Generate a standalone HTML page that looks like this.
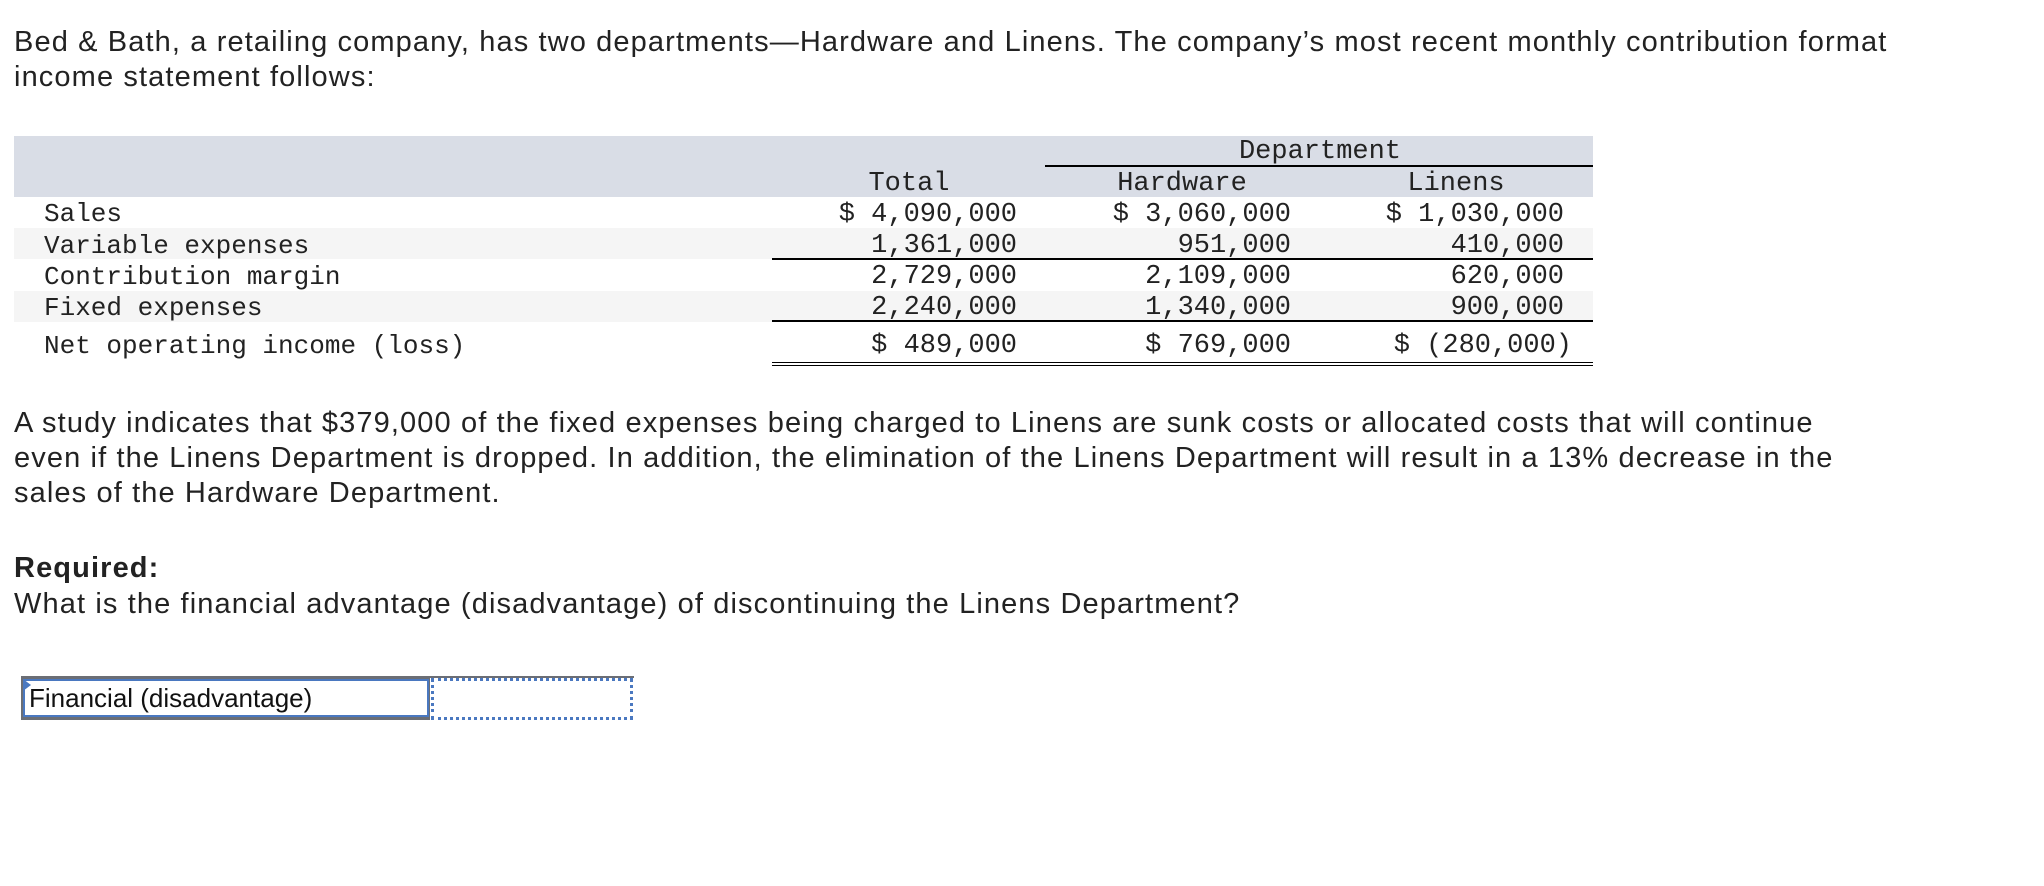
<!DOCTYPE html>
<html><head><meta charset="utf-8"><style>
body{margin:0;width:2044px;height:886px;background:#fff;position:relative;overflow:hidden;font-family:"Liberation Sans",sans-serif;color:#222}
.t{position:absolute;left:14px;font-size:29px;letter-spacing:1.12px;line-height:35px;white-space:nowrap}
.m{position:absolute;font-family:"Liberation Mono",monospace;font-size:27px;line-height:31px;white-space:pre;color:#222}
.l{font-size:26px}
.band{position:absolute;left:14px;width:1579px}
.r{text-align:right}
.line{position:absolute;background:#000;height:2px}
</style></head><body>
<div class="t" style="top:25px">Bed &amp; Bath, a retailing company, has two departments—Hardware and Linens. The company’s most recent monthly contribution format<br>income statement follows:</div>

<div class="band" style="top:136px;height:61px;background:#d9dde6"></div>
<div class="band" style="top:228px;height:31px;background:#f5f5f5"></div>
<div class="band" style="top:291px;height:31px;background:#f5f5f5"></div>

<div class="m" style="left:1220px;width:200px;text-align:center;top:137px">Department</div>
<div class="line" style="left:1045px;width:548px;top:165px"></div>
<div class="m" style="left:809px;width:200px;text-align:center;top:169px">Total</div>
<div class="m" style="left:1082px;width:200px;text-align:center;top:169px">Hardware</div>
<div class="m" style="left:1356px;width:200px;text-align:center;top:169px">Linens</div>

<div class="m l" style="left:44px;top:199px">Sales</div>
<div class="m l" style="left:44px;top:231px">Variable expenses</div>
<div class="m l" style="left:44px;top:262px">Contribution margin</div>
<div class="m l" style="left:44px;top:293px">Fixed expenses</div>
<div class="m l" style="left:44px;top:331px">Net operating income (loss)</div>

<div class="m r" style="left:717px;width:300px;top:200px">$ 4,090,000<br>1,361,000</div>
<div class="m r" style="left:717px;width:300px;top:262px">2,729,000<br>2,240,000</div>
<div class="m r" style="left:717px;width:300px;top:331px">$ 489,000</div>
<div class="m r" style="left:991px;width:300px;top:200px">$ 3,060,000<br>951,000</div>
<div class="m r" style="left:991px;width:300px;top:262px">2,109,000<br>1,340,000</div>
<div class="m r" style="left:991px;width:300px;top:331px">$ 769,000</div>
<div class="m r" style="left:1264px;width:300px;top:200px">$ 1,030,000<br>410,000</div>
<div class="m r" style="left:1264px;width:300px;top:262px">620,000<br>900,000</div>
<div class="m r" style="left:1272px;width:300px;top:331px">$ (280,000)</div>

<div class="line" style="left:772px;width:821px;top:258px"></div>
<div class="line" style="left:772px;width:821px;top:320px"></div>
<div class="line" style="left:772px;width:821px;top:362px;height:1px"></div>
<div class="line" style="left:772px;width:821px;top:365px;height:1px"></div>

<div class="t" style="top:406px">A study indicates that $379,000 of the fixed expenses being charged to Linens are sunk costs or allocated costs that will continue<br>even if the Linens Department is dropped. In addition, the elimination of the Linens Department will result in a 13% decrease in the<br>sales of the Hardware Department.</div>
<div class="t" style="top:551px;font-weight:bold">Required:</div>
<div class="t" style="top:587px">What is the financial advantage (disadvantage) of discontinuing the Linens Department?</div>

<div style="position:absolute;left:21px;top:676px;width:409px;height:44px;box-sizing:border-box;border:2px solid #6b6e75;border-top-width:3px;border-bottom-width:3px"></div>
<div style="position:absolute;left:23px;top:679px;width:406px;height:38px;box-sizing:border-box;border:2px solid #4a78c0"></div>
<div style="position:absolute;left:23px;top:679px;width:0;height:0;border-left:8px solid #4a78c0;border-top:6px solid transparent;border-bottom:6px solid transparent"></div>
<div style="position:absolute;left:29px;top:682px;font-size:26px;line-height:32px;color:#111">Financial (disadvantage)</div>
<div style="position:absolute;left:430px;top:676px;width:204px;height:44px;box-sizing:border-box;border-top:2px solid #6b6e75"></div>
<div style="position:absolute;left:431px;top:678px;width:202px;height:42px;box-sizing:border-box;border:3px dotted #4a78c0"></div>
</body></html>
